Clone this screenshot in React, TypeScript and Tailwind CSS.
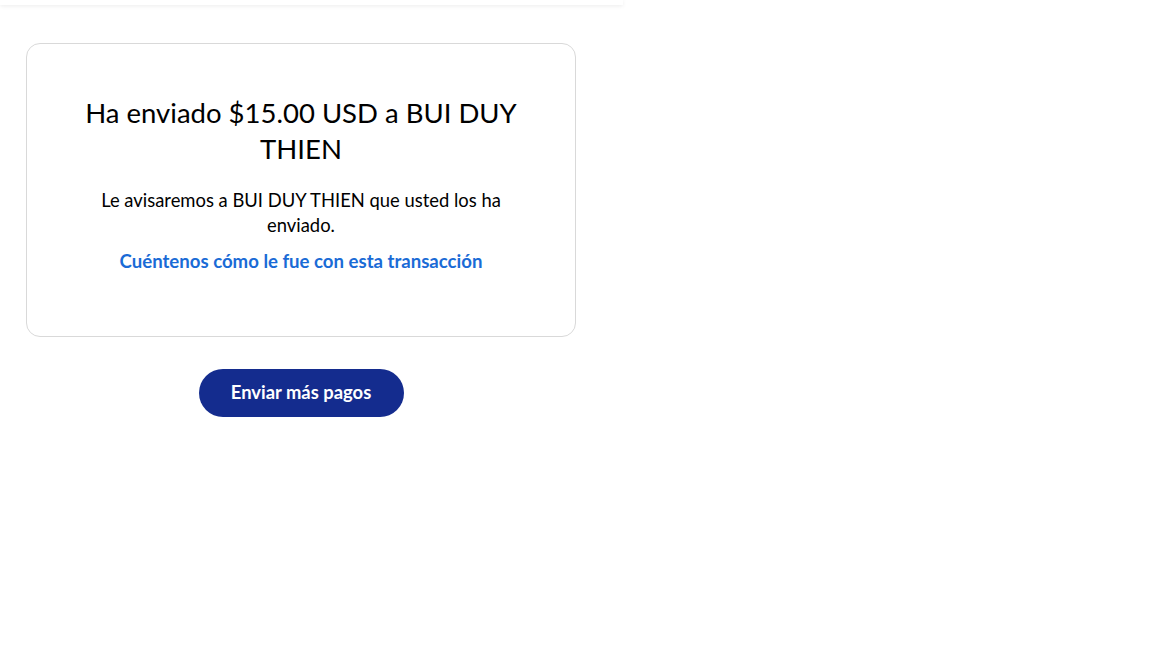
export default function App() {
  return (
    <div className="min-h-[648px] w-full bg-white font-['Lato',sans-serif] text-[#001435]">
      <div className="w-[623px]">
        <div className="h-[5px] bg-white shadow-[0_1px_4px_rgba(0,0,0,0.08)]" />
        <div className="pl-[26px] pt-[38px] w-[576px]">
          <div className="w-[550px] h-[294px] rounded-[14px] border border-[#d9d9d9] flex flex-col items-center pt-[51px] px-[50px]">
            <h1 className="text-[27.5px] leading-[36px] text-center text-black">
              Ha enviado $15.00 USD a BUI DUY THIEN
            </h1>
            <p className="mt-[21px] text-[18.4px] leading-[25px] text-center text-black w-[420px]">
              Le avisaremos a BUI DUY THIEN que usted los ha enviado.
            </p>
            <a href="#" className="mt-[11px] text-[18.6px] leading-[25px] font-bold text-[#1a6bd6]">
              Cuéntenos cómo le fue con esta transacción
            </a>
          </div>
          <div className="flex justify-center mt-[32px]">
            <button className="h-[48px] w-[205px] rounded-full bg-[#142c8e] text-white text-[18.4px] font-bold">
              Enviar más pagos
            </button>
          </div>
        </div>
      </div>
    </div>
  )
}
